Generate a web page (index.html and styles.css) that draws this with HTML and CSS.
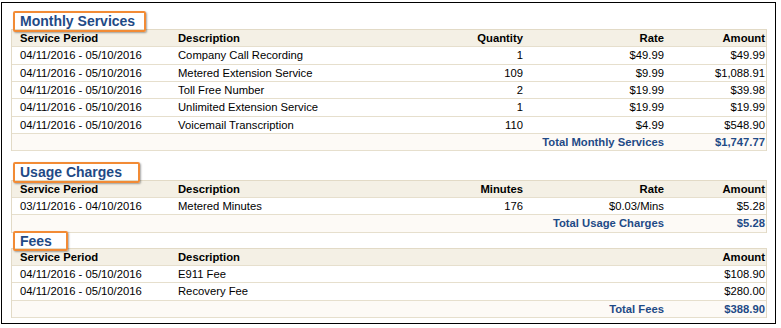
FILE: index.html
```html
<!DOCTYPE html>
<html>
<head>
<meta charset="utf-8">
<link rel="stylesheet" href="styles.css">
</head>
<body>
<div class="frame">
  <section class="section section--monthly">
    <h2 class="title title--monthly">Monthly Services</h2>
    <table class="charges">
      <colgroup><col class="c-period"><col class="c-desc"><col class="c-qty"><col class="c-rate"><col class="c-amt"></colgroup>
      <thead>
        <tr><th class="l">Service Period</th><th class="l">Description</th><th class="r">Quantity</th><th class="r">Rate</th><th class="r amt">Amount</th></tr>
      </thead>
      <tbody>
        <tr><td class="l">04/11/2016 - 05/10/2016</td><td class="l">Company Call Recording</td><td class="r">1</td><td class="r">$49.99</td><td class="r amt">$49.99</td></tr>
        <tr><td class="l">04/11/2016 - 05/10/2016</td><td class="l">Metered Extension Service</td><td class="r">109</td><td class="r">$9.99</td><td class="r amt">$1,088.91</td></tr>
        <tr><td class="l">04/11/2016 - 05/10/2016</td><td class="l">Toll Free Number</td><td class="r">2</td><td class="r">$19.99</td><td class="r amt">$39.98</td></tr>
        <tr><td class="l">04/11/2016 - 05/10/2016</td><td class="l">Unlimited Extension Service</td><td class="r">1</td><td class="r">$19.99</td><td class="r amt">$19.99</td></tr>
        <tr><td class="l">04/11/2016 - 05/10/2016</td><td class="l">Voicemail Transcription</td><td class="r">110</td><td class="r">$4.99</td><td class="r amt">$548.90</td></tr>
        <tr class="total"><td colspan="4" class="r">Total Monthly Services</td><td class="r amt">$1,747.77</td></tr>
      </tbody>
    </table>
  </section>

  <section class="section section--usage">
    <h2 class="title title--usage">Usage Charges</h2>
    <table class="charges">
      <colgroup><col class="c-period"><col class="c-desc"><col class="c-qty"><col class="c-rate"><col class="c-amt"></colgroup>
      <thead>
        <tr><th class="l">Service Period</th><th class="l">Description</th><th class="r">Minutes</th><th class="r">Rate</th><th class="r amt">Amount</th></tr>
      </thead>
      <tbody>
        <tr><td class="l">03/11/2016 - 04/10/2016</td><td class="l">Metered Minutes</td><td class="r">176</td><td class="r">$0.03/Mins</td><td class="r amt">$5.28</td></tr>
        <tr class="total"><td colspan="4" class="r">Total Usage Charges</td><td class="r amt">$5.28</td></tr>
      </tbody>
    </table>
  </section>

  <section class="section section--fees">
    <h2 class="title title--fees">Fees</h2>
    <table class="charges">
      <colgroup><col class="c-period"><col class="c-desc"><col class="c-qty"><col class="c-rate"><col class="c-amt"></colgroup>
      <thead>
        <tr><th class="l">Service Period</th><th class="l">Description</th><th class="r"></th><th class="r"></th><th class="r amt">Amount</th></tr>
      </thead>
      <tbody>
        <tr><td class="l">04/11/2016 - 05/10/2016</td><td class="l">E911 Fee</td><td class="r"></td><td class="r"></td><td class="r amt">$108.90</td></tr>
        <tr><td class="l">04/11/2016 - 05/10/2016</td><td class="l">Recovery Fee</td><td class="r"></td><td class="r"></td><td class="r amt">$280.00</td></tr>
        <tr class="total"><td colspan="4" class="r">Total Fees</td><td class="r amt">$388.90</td></tr>
      </tbody>
    </table>
  </section>
</div>
</body>
</html>
```

FILE: styles.css
```css
html, body {
  margin: 0;
  padding: 0;
  background: #ffffff;
}

body {
  font-family: "Liberation Sans", Arial, sans-serif;
  color: #000000;
}

.frame {
  box-sizing: border-box;
  margin: 2px 0 0 1px;
  width: 775px;
  height: 322px;
  border: 1px solid #000000;
  padding: 0 0 0 9px;
  overflow: hidden;
}

.section--monthly { margin-top: 8px; }
.section--usage { margin-top: 10.5px; }
.section--fees { margin-top: -1.3px; }

.title {
  position: relative;
  z-index: 1;
  box-sizing: border-box;
  display: block;
  height: 21px;
  margin: 0 0 -3px 2px;
  padding: 0 0 0 5px;
  border: 2px solid #f28b35;
  border-radius: 2px;
  box-shadow: 1px 1px 2px rgba(0, 0, 0, 0.35);
  font-size: 14px;
  line-height: 17px;
  font-weight: bold;
  color: #1f4a86;
  white-space: nowrap;
}

.title--monthly { width: 133px; }
.title--usage { width: 127px; }
.title--fees { width: 55px; height: 20px; line-height: 16px; margin-bottom: -3.7px; }

.charges {
  table-layout: fixed;
  width: 756px;
  border-collapse: separate;
  border-spacing: 0;
  border: 1px solid #e2dac6;
  border-bottom: 0;
  font-size: 11.25px;
}

.c-period { width: 158px; }
.c-desc { width: 260px; }
.c-qty { width: 95px; }
.c-rate { width: 141px; }
.c-amt { width: 100px; }

.charges th,
.charges td {
  padding: 0;
  height: 16.33px;
  line-height: 16.33px;
  border-bottom: 1px solid #e6dfcd;
  white-space: nowrap;
  overflow: visible;
}

.charges th {
  font-weight: bold;
  background: #f4f0e5;
}

.charges .l { text-align: left; padding-left: 8px; }
.charges .r { text-align: right; padding-right: 2px; }
.charges .amt { padding-right: 1px; }

.charges tbody td { background: #ffffff; }

.charges .total td {
  background: #fdfaf6;
  font-weight: bold;
  color: #1f4a86;
}
```
